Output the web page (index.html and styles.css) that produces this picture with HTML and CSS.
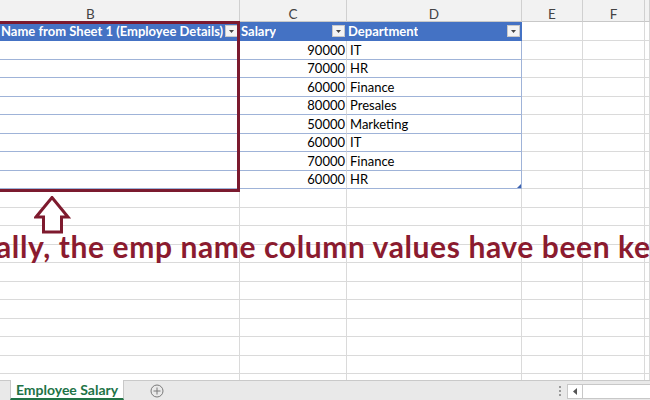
FILE: index.html
```html
<!DOCTYPE html>
<html>
<head>
<meta charset="utf-8">
<link rel="stylesheet" href="styles.css">
</head>
<body>
<div class="app">
  <div class="sheet">
    <div class="row colhead">
      <div class="c hb">B</div>
      <div class="c">C</div>
      <div class="c">D</div>
      <div class="c">E</div>
      <div class="c">F</div>
      <div class="c"></div>
    </div>
    <div class="row thead">
      <div class="c th">
        <span class="tht">Name from Sheet 1 (Employee Details)</span>
        <span class="flt"><svg width="5" height="3" viewBox="0 0 5 3"><path d="M0 0H5L2.5 3Z" fill="#444"/></svg></span>
      </div>
      <div class="c th">
        <span class="tht">Salary</span>
        <span class="flt"><svg width="5" height="3" viewBox="0 0 5 3"><path d="M0 0H5L2.5 3Z" fill="#444"/></svg></span>
      </div>
      <div class="c th">
        <span class="tht">Department</span>
        <span class="flt"><svg width="5" height="3" viewBox="0 0 5 3"><path d="M0 0H5L2.5 3Z" fill="#444"/></svg></span>
      </div>
      <div class="c"></div>
      <div class="c"></div>
      <div class="c"></div>
    </div>

    <div class="row tr"><div class="c td"></div><div class="c td num">90000</div><div class="c td dep">IT</div><div class="c"></div><div class="c"></div><div class="c"></div></div>
    <div class="row tr"><div class="c td"></div><div class="c td num">70000</div><div class="c td dep">HR</div><div class="c"></div><div class="c"></div><div class="c"></div></div>
    <div class="row tr"><div class="c td"></div><div class="c td num">60000</div><div class="c td dep">Finance</div><div class="c"></div><div class="c"></div><div class="c"></div></div>
    <div class="row tr"><div class="c td"></div><div class="c td num">80000</div><div class="c td dep">Presales</div><div class="c"></div><div class="c"></div><div class="c"></div></div>
    <div class="row tr"><div class="c td"></div><div class="c td num">50000</div><div class="c td dep">Marketing</div><div class="c"></div><div class="c"></div><div class="c"></div></div>
    <div class="row tr"><div class="c td"></div><div class="c td num">60000</div><div class="c td dep">IT</div><div class="c"></div><div class="c"></div><div class="c"></div></div>
    <div class="row tr"><div class="c td"></div><div class="c td num">70000</div><div class="c td dep">Finance</div><div class="c"></div><div class="c"></div><div class="c"></div></div>
    <div class="row tr"><div class="c td"></div><div class="c td num">60000</div><div class="c td dep last">HR<span class="grip"></span></div><div class="c"></div><div class="c"></div><div class="c"></div></div>

    <div class="row"><div class="c"></div><div class="c"></div><div class="c"></div><div class="c"></div><div class="c"></div><div class="c"></div></div>
    <div class="row"><div class="c"></div><div class="c"></div><div class="c"></div><div class="c"></div><div class="c"></div><div class="c"></div></div>
    <div class="row"><div class="c"></div><div class="c"></div><div class="c"></div><div class="c"></div><div class="c"></div><div class="c"></div></div>
    <div class="row"><div class="c"></div><div class="c"></div><div class="c"></div><div class="c"></div><div class="c"></div><div class="c"></div></div>
    <div class="row"><div class="c"></div><div class="c"></div><div class="c"></div><div class="c"></div><div class="c"></div><div class="c"></div></div>
    <div class="row"><div class="c"></div><div class="c"></div><div class="c"></div><div class="c"></div><div class="c"></div><div class="c"></div></div>
    <div class="row"><div class="c"></div><div class="c"></div><div class="c"></div><div class="c"></div><div class="c"></div><div class="c"></div></div>
    <div class="row"><div class="c"></div><div class="c"></div><div class="c"></div><div class="c"></div><div class="c"></div><div class="c"></div></div>
    <div class="row"><div class="c"></div><div class="c"></div><div class="c"></div><div class="c"></div><div class="c"></div><div class="c"></div></div>
    <div class="row"><div class="c"></div><div class="c"></div><div class="c"></div><div class="c"></div><div class="c"></div><div class="c"></div></div>
    <div class="row"><div class="c"></div><div class="c"></div><div class="c"></div><div class="c"></div><div class="c"></div><div class="c"></div></div>

    <div class="redbox"></div>
    <svg class="arrow" width="40" height="40" viewBox="0 0 40 40">
      <path d="M18 1.5 L34 21 L27.5 21 L27.5 36 L9.5 36 L9.5 21 L2 21 Z" fill="#fff" stroke="#7e1a2e" stroke-width="3" stroke-linejoin="miter"/>
    </svg>
    <div class="caption">ally, the emp name column values have been ke</div>
  </div>

  <div class="tabbar">
    <div class="tabnav"></div>
    <div class="tab">Employee Salary</div>
    <div class="addsheet">
      <svg width="14" height="14" viewBox="0 0 14 14"><circle cx="7" cy="7" r="6" fill="none" stroke="#7a7a7a" stroke-width="1"/><path d="M7 3.5V10.5M3.5 7H10.5" stroke="#7a7a7a" stroke-width="1"/></svg>
    </div>
    <div class="spacer"></div>
    <div class="dots"><i></i><i></i><i></i></div>
    <div class="hscroll">
      <div class="sbtn"><svg width="4" height="7" viewBox="0 0 4 7"><path d="M4 0V7L0 3.5Z" fill="#555"/></svg></div>
      <div class="strack"></div>
    </div>
  </div>
</div>
</body>
</html>
```

FILE: styles.css
```css
* { box-sizing: border-box; }
html, body { margin: 0; padding: 0; }
body {
  width: 650px;
  height: 400px;
  overflow: hidden;
  background: #fff;
  font-family: Lato, "Open Sans", sans-serif;
}
.app {
  width: 650px;
  height: 400px;
  display: flex;
  flex-direction: column;
}
.sheet {
  position: relative;
  height: 380px;
  overflow: hidden;
}
.row {
  display: grid;
  grid-template-columns: 240px 107px 175px 61px 62px 1fr;
  height: 18.5px;
}
.c {
  border-right: 1px solid #dadada;
  border-bottom: 1px solid #dadada;
  display: flex;
  align-items: center;
  font-size: 13px;
  color: #000;
  white-space: nowrap;
  overflow: hidden;
}
.colhead {
  height: 22px;
  background: #f2f2f2;
}
.colhead .c {
  justify-content: center;
  color: #444;
  font-size: 13.5px;
  border-right: 1px solid #d0d0d0;
  border-bottom: 1px solid #c8c8c8;
  padding-top: 6px;
}
.colhead .hb {
  justify-content: flex-start;
  padding-left: 86px;
}
.thead { height: 19px; }
.th {
  background: #4472c4;
  color: #fff;
  font-weight: bold;
  border-right: none;
  border-bottom: 1px solid #4472c4;
  justify-content: space-between;
  padding: 0 2px 0 1px;
}
.tht { overflow: hidden; }
.flt {
  width: 13px;
  height: 12px;
  background: #f4f4f4;
  border: 1px solid #c8c8c8;
  display: flex;
  align-items: center;
  justify-content: center;
  flex: none;
}
.td { border-bottom: 1px solid #9fb3d8; }
.num {
  justify-content: flex-end;
  padding-right: 1px;
}
.dep {
  padding-left: 3px;
  border-right: 1px solid #9fb3d8;
  position: relative;
}
.grip {
  position: absolute;
  right: 0;
  bottom: 0;
  width: 0;
  height: 0;
  border-left: 4px solid transparent;
  border-bottom: 4px solid #3c62b0;
}
.redbox {
  position: absolute;
  left: -6px;
  top: 20.5px;
  width: 246px;
  height: 171.5px;
  border: 3px solid #7b1a2f;
}
.arrow {
  position: absolute;
  left: 34px;
  top: 196px;
}
.caption {
  position: absolute;
  left: -4px;
  top: 228px;
  white-space: nowrap;
  font-size: 30px;
  line-height: 1.2;
  font-weight: bold;
  color: #8b1b2f;
  letter-spacing: 0.6px;
}
.tabbar {
  height: 20px;
  display: flex;
  align-items: stretch;
  background: #e9e9e9;
  border-top: 1px solid #c9c9c9;
}
.tabnav { width: 10px; }
.tab {
  width: 114px;
  background: #fff;
  border-left: 1px solid #c8c8c8;
  border-right: 1px solid #c8c8c8;
  border-bottom: 2px solid #217346;
  margin-top: -1px;
  color: #217346;
  font-weight: bold;
  font-size: 14px;
  display: flex;
  align-items: center;
  justify-content: center;
}
.addsheet {
  width: 66px;
  display: flex;
  align-items: center;
  justify-content: center;
}
.spacer { flex: 1; }
.dots {
  width: 12px;
  display: flex;
  flex-direction: column;
  align-items: center;
  justify-content: center;
  gap: 2px;
  margin-right: 1px;
}
.dots i {
  width: 2px;
  height: 2px;
  background: #9a9a9a;
}
.hscroll {
  width: 83px;
  display: flex;
  padding: 3px 0 1px 0;
}
.sbtn {
  width: 16px;
  background: #fff;
  border: 1px solid #c8c8c8;
  display: flex;
  align-items: center;
  justify-content: center;
}
.strack {
  flex: 1;
  background: #fff;
  border-top: 1px solid #c8c8c8;
  border-bottom: 1px solid #c8c8c8;
}
```
